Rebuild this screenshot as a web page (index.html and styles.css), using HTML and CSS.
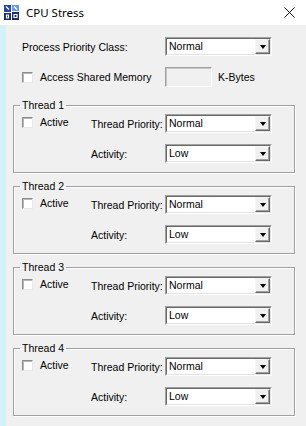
FILE: index.html
```html
<!DOCTYPE html>
<html lang="en">
<head>
    <meta charset="UTF-8">
    <meta name="viewport" content="width=device-width, initial-scale=1.0">
    <title>CPU Stress</title>
    <link rel="stylesheet" href="styles.css">
</head>
<body>
    <div class="window">
        <div class="titlebar">
            <svg class="app-icon" width="15" height="15" viewBox="0 0 15 15">
                <rect x="0" y="0" width="7" height="7" fill="#27479a"/>
                <rect x="8" y="0" width="7" height="6" fill="#6a9be0"/>
                <rect x="0" y="8" width="7" height="7" fill="#1b2c6a"/>
                <rect x="8" y="7" width="7" height="8" fill="#1b2c6a"/>
                <path d="M2 1.5l3 3M10 1.5l3 3M2.5 10h2v3h-2zM10 9.5h3v3h-3z" stroke="#fff" stroke-width="1.2" fill="none"/>
            </svg>
            <span class="title">CPU Stress</span>
            <svg class="close" width="11" height="11" viewBox="0 0 11 11">
                <path d="M0.5 0.5l10 10M10.5 0.5l-10 10" stroke="#111" stroke-width="1"/>
            </svg>
        </div>

        <div class="dialog">
            <div class="row">
                <span class="label wide">Process Priority Class:</span>
                <div class="combo"><div class="combo-inner"><span class="combo-text">Normal</span><span class="combo-btn"><i class="arrow"></i></span></div></div>
            </div>

            <div class="row">
                <label class="check wide"><span class="box"></span>Access Shared Memory</label>
                <span class="textbox"></span>
                <span class="unit">K-Bytes</span>
            </div>

            <fieldset class="thread">
                <legend>Thread 1</legend>
                <label class="check active"><span class="box"></span>Active</label>
                <span class="label">Thread Priority:</span>
                <div class="combo"><div class="combo-inner"><span class="combo-text">Normal</span><span class="combo-btn"><i class="arrow"></i></span></div></div>
                <span class="label second">Activity:</span>
                <div class="combo second"><div class="combo-inner"><span class="combo-text">Low</span><span class="combo-btn"><i class="arrow"></i></span></div></div>
            </fieldset>

            <fieldset class="thread">
                <legend>Thread 2</legend>
                <label class="check active"><span class="box"></span>Active</label>
                <span class="label">Thread Priority:</span>
                <div class="combo"><div class="combo-inner"><span class="combo-text">Normal</span><span class="combo-btn"><i class="arrow"></i></span></div></div>
                <span class="label second">Activity:</span>
                <div class="combo second"><div class="combo-inner"><span class="combo-text">Low</span><span class="combo-btn"><i class="arrow"></i></span></div></div>
            </fieldset>

            <fieldset class="thread">
                <legend>Thread 3</legend>
                <label class="check active"><span class="box"></span>Active</label>
                <span class="label">Thread Priority:</span>
                <div class="combo"><div class="combo-inner"><span class="combo-text">Normal</span><span class="combo-btn"><i class="arrow"></i></span></div></div>
                <span class="label second">Activity:</span>
                <div class="combo second"><div class="combo-inner"><span class="combo-text">Low</span><span class="combo-btn"><i class="arrow"></i></span></div></div>
            </fieldset>

            <fieldset class="thread">
                <legend>Thread 4</legend>
                <label class="check active"><span class="box"></span>Active</label>
                <span class="label">Thread Priority:</span>
                <div class="combo"><div class="combo-inner"><span class="combo-text">Normal</span><span class="combo-btn"><i class="arrow"></i></span></div></div>
                <span class="label second">Activity:</span>
                <div class="combo second"><div class="combo-inner"><span class="combo-text">Low</span><span class="combo-btn"><i class="arrow"></i></span></div></div>
            </fieldset>
        </div>
    </div>
</body>
</html>
```

FILE: styles.css
```css
* {
    margin: 0;
    padding: 0;
    box-sizing: border-box;
}

body {
    width: 306px;
    height: 426px;
    overflow: hidden;
    background: #f0f0f0;
    font-family: 'Liberation Sans', Arial, sans-serif;
    font-size: 10.5px;
    color: #000;
}

.window {
    height: 426px;
    background: #f0f0f0;
    border-left: 6px solid #d4f1fa;
}

.titlebar {
    height: 25px;
    margin-left: -6px;
    background: #fff;
    display: flex;
    align-items: center;
    padding: 0 11px 0 4px;
}

.app-icon {
    flex: none;
}

.title {
    font-family: 'Noto Sans', sans-serif;
    font-size: 11.5px;
    margin-left: 7px;
    flex: 1;
}

.close {
    flex: none;
}

.dialog {
    padding: 12px 0 0 7px;
}

.row {
    display: flex;
    align-items: center;
    height: 19px;
    padding-left: 9px;
}

.row + .row {
    height: 20px;
    margin-top: 11px;
}

.wide {
    width: 143px;
}

.label {
    white-space: nowrap;
}

/* checkbox */
.check {
    display: flex;
    align-items: center;
    white-space: nowrap;
}

.box {
    width: 11px;
    height: 11px;
    margin-right: 7px;
    background: #fff;
    border: 1px solid;
    border-color: #8c8c8c #e8e8e8 #e8e8e8 #8c8c8c;
    box-shadow: inset 1px 1px #b8b8b8;
}

/* combo box */
.combo {
    width: 107px;
    height: 19px;
    border: 1px solid;
    border-color: #a0a0a0 #fff #fff #a0a0a0;
}

.combo-inner {
    height: 100%;
    display: flex;
    background: #fff;
    border: 1px solid;
    border-color: #696969 #e3e3e3 #e3e3e3 #696969;
}

.combo-text {
    flex: 1;
    padding-left: 2px;
    line-height: 15px;
}

.combo-btn {
    width: 15px;
    display: flex;
    align-items: center;
    justify-content: center;
    background: #f0f0f0;
    border: 1px solid;
    border-color: #f6f6f6 #696969 #696969 #f6f6f6;
    box-shadow: inset -1px -1px #a0a0a0;
}

.arrow {
    width: 0;
    height: 0;
    margin-top: 1px;
    border-top: 4px solid #000;
    border-left: 3.5px solid transparent;
    border-right: 3.5px solid transparent;
}

.textbox {
    width: 47px;
    height: 20px;
    background: #f0f0f0;
    border: 1px solid;
    border-color: #a0a0a0 #fff #fff #a0a0a0;
    box-shadow: inset 1px 1px #c8c8c8;
}

.unit {
    margin-left: 6px;
}

/* thread group boxes */
.thread {
    width: 281px;
    margin-top: 12px;
    padding: 3px 22px 9px 8px;
    border: 1px solid #a0a0a0;
    box-shadow: 1px 1px 0 #fff, inset 1px 1px 0 #fff;
    display: grid;
    grid-template-columns: 69px 74px 107px;
    grid-template-rows: 19px 19px;
    row-gap: 11px;
    align-items: center;
}

.thread + .thread {
    margin-top: 7px;
}

.thread legend {
    padding: 0 2px;
    margin-left: -2px;
    line-height: 12px;
}

.thread .active {
    align-self: start;
    margin-top: 2px;
}

.thread .second {
    grid-row: 2;
}

.thread .label.second {
    grid-column: 2;
}

.thread .combo.second {
    grid-column: 3;
}
```
